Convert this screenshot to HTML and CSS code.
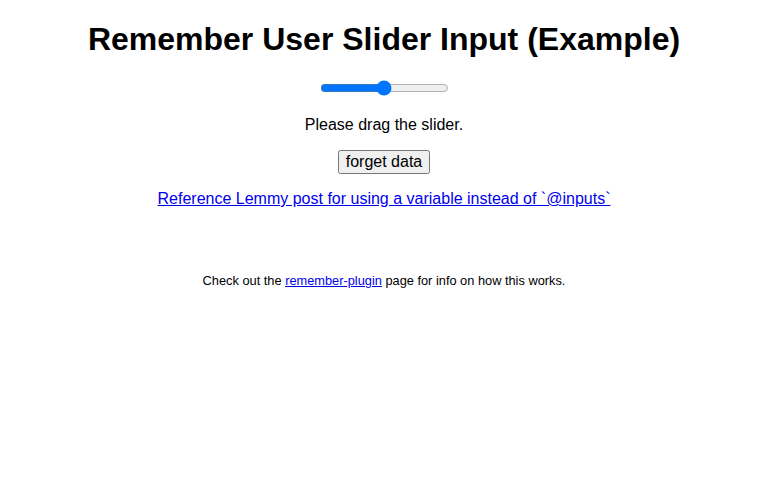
FILE: index.html
```html
<!DOCTYPE html>
<html>
<head>
<meta charset="utf-8">
<link rel="stylesheet" href="styles.css">
</head>
<body>
<main class="page">
  <h1 class="title">Remember User Slider Input (Example)</h1>
  <div class="slider-row"><input class="slider" type="range" min="0" max="100" value="50"></div>
  <p class="msg">Please drag the slider.</p>
  <div class="btn-row"><button class="btn">forget data</button></div>
  <p class="ref"><a href="#">Reference Lemmy post for using a variable instead of `@inputs`</a></p>
  <p class="footer">Check out the <a href="#">remember-plugin</a> page for info on how this works.</p>
</main>
</body>
</html>
```
FILE: styles.css
```css
body {
  margin: 8px;
  font-family: "Liberation Sans", Arial, sans-serif;
  font-size: 16px;
  color: #000;
  background: #fff;
}
.page {
  text-align: center;
}
.title {
  font-size: 32px;
  font-weight: bold;
  margin: 13px 0 20px;
}
.slider-row {
  margin: 0;
}
.slider {
  margin: 2px;
  accent-color: #0075ff;
}
.msg {
  margin: 16px 0;
}
.btn {
  font-family: "Liberation Sans", Arial, sans-serif;
  font-size: 16px;
}
.ref {
  margin: 16px 0;
}
a {
  color: #0000ee;
}
.footer {
  font-size: 12.8px;
  margin-top: 65px;
}
```
